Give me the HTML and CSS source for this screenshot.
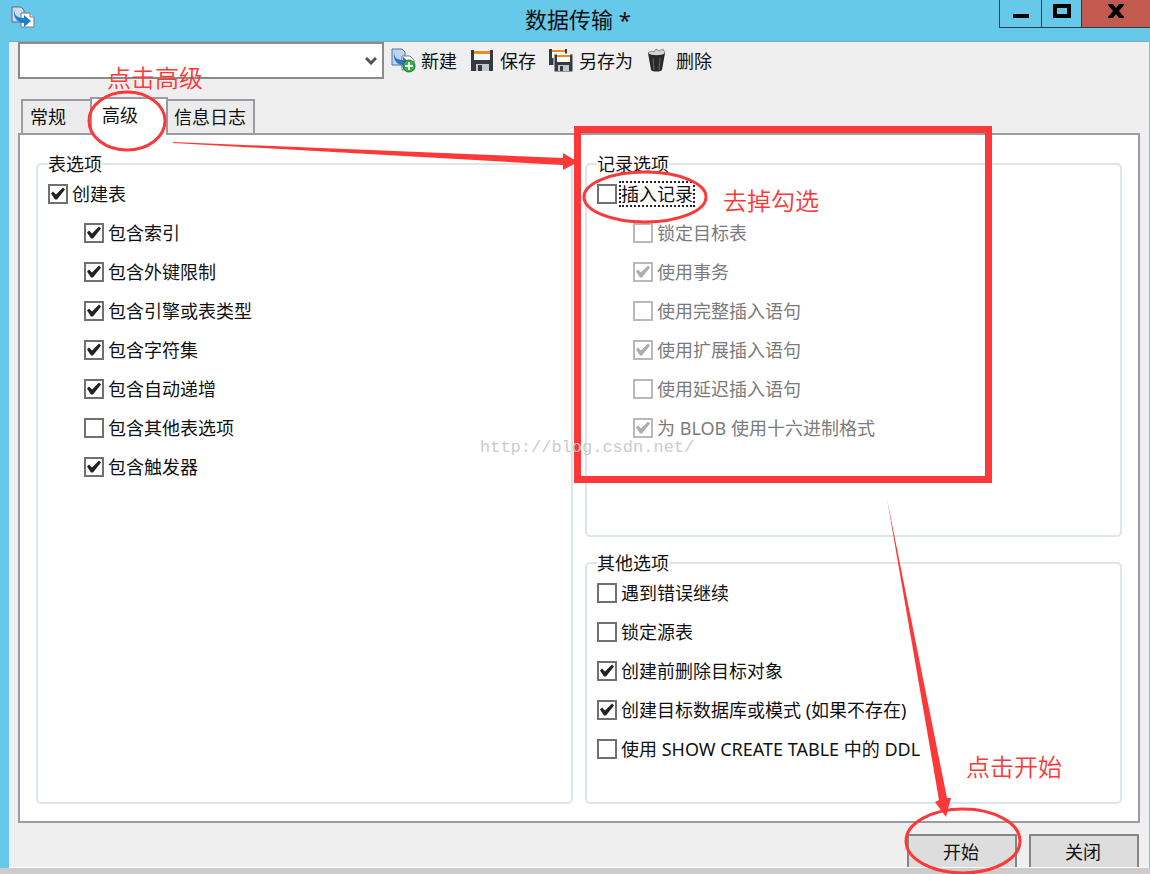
FILE: index.html
```
<!DOCTYPE html>
<html lang="zh-CN">
<head>
    <meta charset="UTF-8">
    <meta name="viewport" content="width=device-width, initial-scale=1.0">
    <title>数据传输</title>
    <link rel="stylesheet" href="styles.css">
</head>
<body>
    <div class="window">
        <header class="titlebar">
            <svg class="app-icon" viewBox="0 0 25 25" aria-hidden="true">
                <path d="M1 2h9l3 3v12H1z" fill="#cfd9ea" stroke="#5c6b82"/>
                <path d="M10 8h9l4 4v10H10z" fill="#fff" stroke="#747b85"/>
                <path d="M19 8v4h4" fill="#dfe4ea" stroke="#747b85"/>
                <path d="M3 4c0 6 3 9 10 9V10l7 6-7 6v-4C6 18 2 12 3 4z" fill="#1d7fd0"/>
            </svg>
            <h1>数据传输 *</h1>
            <div class="window-buttons">
                <button class="min" aria-label="最小化"><svg width="16" height="14"><path d="M0 12h16" stroke="#000" stroke-width="4"/></svg></button>
                <button class="max" aria-label="最大化"><svg width="18" height="14"><path d="M2 2h14v10H2z" fill="none" stroke="#000" stroke-width="4"/></svg></button>
                <button class="close" aria-label="关闭窗口"><svg width="16" height="14"><path d="M0 0h5l3 4 3-4h5v1l-5 6 5 6v1h-5l-3-4-3 4H0v-1l5-6-5-6z"/></svg></button>
            </div>
        </header>

        <main class="client">
            <div class="toolbar">
                <div class="profile">
                    <select aria-label="配置文件"><option label=" "></option></select>
                    <svg width="12" height="8" aria-hidden="true"><path d="M1 1l5 5 5-5" fill="none" stroke="#555" stroke-width="3"/></svg>
                </div>
                <button>
                    <svg viewBox="0 0 25 25" aria-hidden="true">
                        <path d="M1 1h10l3 3v13H1z" fill="#bfd3ef" stroke="#4f75a8"/>
                        <path d="M11 8h8l4 4v10H11z" fill="#fff" stroke="#747b85"/>
                        <path d="M3 4c0 6 3 8 9 8v-3l6 5-6 7v-4C6 17 2 12 3 4z" fill="#2478c4"/>
                        <circle cx="18" cy="18" r="6" fill="#35b34a" stroke="#14772a"/>
                        <path d="M18 14v8M14 18h8" stroke="#fff" stroke-width="2"/>
                    </svg>新建</button>
                <button>
                    <svg viewBox="0 0 25 25" aria-hidden="true">
                        <path d="M1 2h22v21H1z" fill="#353a42"/>
                        <path d="M4 2h16v10H4z" fill="#f8f8f8"/>
                        <path d="M4 3h16v3H4z" fill="#f18a25"/>
                        <path d="M6 16h13v7H6z" fill="#c4c7cc"/>
                        <path d="M8 17h4v6H8z" fill="#353a42"/>
                    </svg>保存</button>
                <button>
                    <svg viewBox="0 0 25 25" aria-hidden="true">
                        <path d="M0 1h18v16H0z" fill="#353a42"/>
                        <path d="M3 1h13v9H3z" fill="#f8f8f8"/>
                        <path d="M3 2h13v2H3z" fill="#f18a25"/>
                        <path d="M5 6h19v18H5z" fill="#353a42" stroke="#efefef"/>
                        <path d="M8 6h13v8H8z" fill="#fff"/>
                        <path d="M8 7h13v2H8z" fill="#f18a25"/>
                        <path d="M9 17h11v6H9z" fill="#c4c7cc"/>
                        <path d="M11 18h3v5h-3z" fill="#353a42"/>
                    </svg>另存为</button>
                <button>
                    <svg viewBox="0 0 25 25" aria-hidden="true">
                        <path d="M2 5l3-2 3 1 2-3 3 2 4-2 2 4-3 3H5z" fill="#d4d4d4" stroke="#888"/>
                        <path d="M2 5c3 3 14 3 17 0l-3 17c-2 2-9 2-11 0z" fill="#292929"/>
                        <path d="M7 10l1 12M14 10l-1 12" stroke="#666"/>
                    </svg>删除</button>
            </div>

            <div class="tabs" role="tablist">
                <button role="tab" aria-selected="false">常规</button>
                <button role="tab" aria-selected="true" class="active">高级</button>
                <button role="tab" aria-selected="false">信息日志</button>
            </div>

            <div class="panel" role="tabpanel">
                <fieldset class="tables">
                    <legend>表选项</legend>
                    <label class="option"><input type="checkbox" checked><span>创建表</span></label>
                    <div class="sub">
                        <label class="option"><input type="checkbox" checked><span>包含索引</span></label>
                        <label class="option"><input type="checkbox" checked><span>包含外键限制</span></label>
                        <label class="option"><input type="checkbox" checked><span>包含引擎或表类型</span></label>
                        <label class="option"><input type="checkbox" checked><span>包含字符集</span></label>
                        <label class="option"><input type="checkbox" checked><span>包含自动递增</span></label>
                        <label class="option"><input type="checkbox"><span>包含其他表选项</span></label>
                        <label class="option"><input type="checkbox" checked><span>包含触发器</span></label>
                    </div>
                </fieldset>
                <fieldset class="records">
                    <legend>记录选项</legend>
                    <label class="option focused"><input type="checkbox"><span>插入记录</span></label>
                    <div class="sub">
                        <label class="option"><input type="checkbox" disabled><span>锁定目标表</span></label>
                        <label class="option"><input type="checkbox" checked disabled><span>使用事务</span></label>
                        <label class="option"><input type="checkbox" disabled><span>使用完整插入语句</span></label>
                        <label class="option"><input type="checkbox" checked disabled><span>使用扩展插入语句</span></label>
                        <label class="option"><input type="checkbox" disabled><span>使用延迟插入语句</span></label>
                        <label class="option"><input type="checkbox" checked disabled><span>为 BLOB 使用十六进制格式</span></label>
                    </div>
                </fieldset>
                <fieldset class="others">
                    <legend>其他选项</legend>
                    <label class="option"><input type="checkbox"><span>遇到错误继续</span></label>
                    <label class="option"><input type="checkbox"><span>锁定源表</span></label>
                    <label class="option"><input type="checkbox" checked><span>创建前删除目标对象</span></label>
                    <label class="option"><input type="checkbox" checked><span>创建目标数据库或模式 (如果不存在)</span></label>
                    <label class="option"><input type="checkbox"><span>使用 SHOW CREATE TABLE 中的 DDL</span></label>
                </fieldset>
            </div>

            <footer class="actions">
                <button>开始</button>
                <button>关闭</button>
            </footer>
        </main>
        <div class="bottom-strip"></div>

        <!-- tutorial marks drawn over the dialog -->
        <svg class="marks" width="1150" height="874" aria-hidden="true">
            <path class="solid" fill-rule="evenodd" d="M574 126h418v357H574zM581 133v343h404V133z"/>
            <ellipse cx="127" cy="121" rx="38" ry="29"/>
            <ellipse cx="645" cy="197" rx="61" ry="25"/>
            <ellipse cx="963" cy="841" rx="57" ry="32"/>
            <path class="solid" d="M173 142v1l390 22v5l15-8-15-9v5z"/>
            <path class="solid" d="M887 499l52 301-4 2 11 15 5-19h-4z"/>
        </svg>
        <span class="note note-tab">点击高级</span>
        <span class="note note-uncheck">去掉勾选</span>
        <span class="note note-start">点击开始</span>
        <span class="watermark">http://blog.csdn.net/</span>
    </div>
</body>
</html>
```
FILE: styles.css
```
*{
    margin: 0;
    padding: 0;
    box-sizing: border-box;
}
body{
    font-family: "Noto Sans", "Noto Sans CJK SC", sans-serif;
    font-size: 18px;
    line-height: 22px;
    color: #111;
}
button, select{
    font: inherit;
    color: inherit;
    border: none;
    background: none;
}
.window{
    position: relative;
    min-height: 100vh;
    display: flex;
    flex-direction: column;
    overflow: hidden;
    background-color: #66c9ea;
}

/* title bar */
.titlebar{
    height: 41px;
    display: grid;
    grid-template-columns: 1fr auto 1fr;
    align-items: start;
    padding-left: 6px;
}
.app-icon{
    width: 25px;
    height: 25px;
    margin: 5px 0 0 5px;
}
.titlebar h1{
    font-size: 22px;
    font-weight: 400;
    line-height: 38px;
}
.window-buttons{
    display: flex;
    justify-content: flex-end;
}
.window-buttons button{
    height: 28px;
    padding-bottom: 6px;
    display: flex;
    align-items: center;
    justify-content: center;
    border: 1px solid #24404b;
    border-width: 0 0 1px 1px;
}
.window-buttons .min{
    width: 42px;
}
.window-buttons .max{
    width: 40px;
}
.window-buttons .close{
    width: 69px;
    background-color: #c25a50;
}

.client{
    flex: 1;
    display: flex;
    flex-direction: column;
    margin: 0 1px 0 9px;
    padding: 0 9px;
    background-color: #efefef;
    border-top: 1px solid #7fa9b8;
    border-bottom: 1px solid #fff;
}
.bottom-strip{
    height: 6px;
    background-color: #ccc;
}

/* toolbar */
.toolbar{
    display: flex;
    align-items: center;
    gap: 13px;
    height: 37px;
}
.profile{
    position: relative;
    width: 366px;
    height: 37px;
    margin-right: -6px;
}
.profile select{
    appearance: none;
    width: 100%;
    height: 100%;
    background-color: #fff;
    border: 2px solid #8a8a8a;
}
.profile svg{
    position: absolute;
    right: 7px;
    top: 15px;
    pointer-events: none;
}
.toolbar button{
    display: flex;
    align-items: center;
    gap: 5px;
    white-space: nowrap;
}
.toolbar button svg{
    width: 25px;
    height: 25px;
}

/* tabs */
.tabs{
    display: flex;
    align-items: flex-end;
    margin-top: 18px;
    padding-left: 3px;
}
.tabs button{
    height: 34px;
    padding: 0 7px;
    text-align: left;
    background-color: #ececec;
    border: 2px solid #9b9ca3;
    border-bottom: none;
}
.tabs button:first-child{
    width: 69px;
    border-right: none;
}
.tabs button:last-child{
    width: 87px;
    padding: 0 6px;
    border-left: none;
}
.tabs .active{
    position: relative;
    width: 78px;
    height: 38px;
    margin-bottom: -2px;
    padding: 0 10px 4px;
    background-color: #fff;
}

.panel{
    flex: 1;
    display: grid;
    grid-template-columns: 1fr 1fr;
    grid-template-rows: 1fr auto;
    gap: 15px 12px;
    padding: 18px 16px 17px;
    background-color: #fff;
    border: 2px solid #9b9ca3;
}
fieldset{
    min-width: 0;
    padding: 0 10px;
    border: 2px solid #dde5ea;
    border-radius: 5px;
}
legend{
    height: 21px;
}
.tables{
    grid-row: span 2;
}
.others{
    padding-bottom: 34px;
}
.option{
    display: flex;
    align-items: center;
    gap: 4px;
    height: 39px;
    white-space: nowrap;
}
.sub{
    padding-left: 36px;
}
.option input{
    appearance: none;
    width: 20px;
    height: 20px;
    background-color: #fff;
    border: 2px solid #707070;
}
.option input:checked::before{
    content: "";
    display: block;
    width: 16px;
    height: 16px;
    background-color: #222;
    clip-path: polygon(1px 8px, 3px 6px, 6px 9px, 13px 2px, 15px 4px, 7px 14px, 5px 14px);
}
.option input:disabled{
    border-color: #b9b9b9;
}
.option input:disabled::before{
    background-color: #adadad;
}
.option input:disabled + span{
    color: #7b7b7b;
}
.focused span{
    outline: 2px dotted #222;
}

.actions{
    display: flex;
    justify-content: flex-end;
    gap: 12px;
    padding: 11px 1px 0 0;
}
.actions button{
    width: 110px;
    height: 33px;
    padding-right: 2px;
    background-color: #ddd;
    border: 2px solid #858585;
    border-bottom: none;
}

/* marks over the dialog */
.marks{
    position: absolute;
    left: 0;
    top: 0;
    pointer-events: none;
    fill: none;
    stroke: #fc3838;
    stroke-width: 3;
}
.marks .solid{
    fill: #fc3838;
    stroke: none;
}
.note{
    position: absolute;
    font-family: "Noto Sans CJK SC", sans-serif;
    font-size: 24px;
    font-weight: 350;
    line-height: 28px;
    color: #fc3838;
}
.note-tab{
    left: 107px;
    top: 63px;
}
.note-uncheck{
    left: 723px;
    top: 186px;
}
.note-start{
    left: 966px;
    top: 752px;
}
.watermark{
    position: absolute;
    left: 480px;
    top: 437px;
    font-family: "Liberation Mono", monospace;
    font-size: 17px;
    color: #ccc;
}
```
